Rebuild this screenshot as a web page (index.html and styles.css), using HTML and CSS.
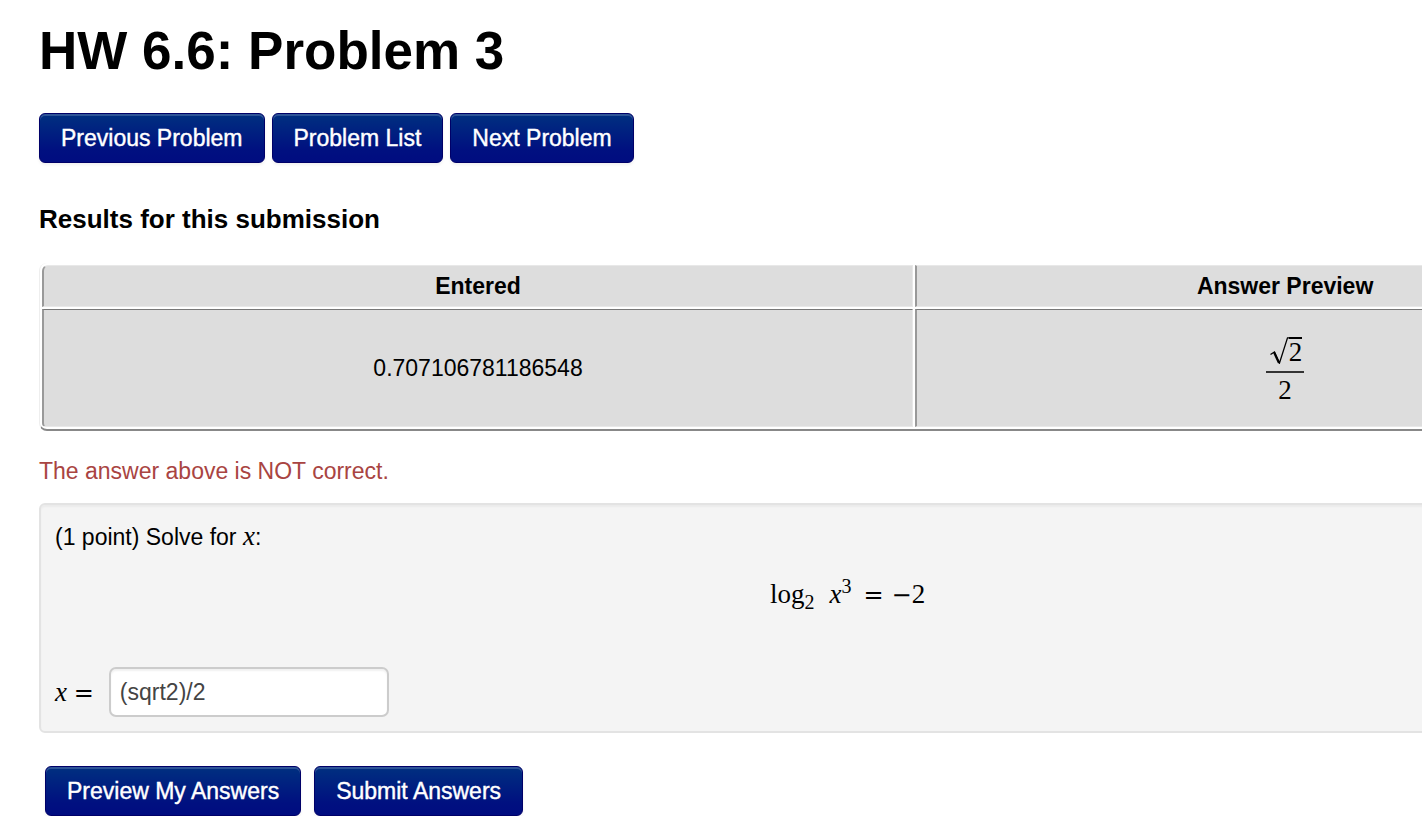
FILE: index.html
```html
<!DOCTYPE html>
<html lang="en">
<head>
<meta charset="utf-8">
<title>HW 6.6: Problem 3</title>
<link rel="stylesheet" href="styles.css">
</head>
<body>
<main class="page">
  <div class="content">
    <h1 class="title">HW 6.6: Problem 3</h1>
    <nav class="problem-nav">
      <a class="btn" href="#previous">Previous Problem</a>
      <a class="btn" href="#list">Problem List</a>
      <a class="btn" href="#next">Next Problem</a>
    </nav>
    <h3 class="subtitle">Results for this submission</h3>
    <table class="results">
      <thead>
        <tr><th class="col-entered" scope="col">Entered</th><th scope="col">Answer Preview</th></tr>
      </thead>
      <tbody>
        <tr>
          <td>0.707106781186548</td>
          <td>
            <span class="fraction math">
              <span class="numerator">
                <svg class="radical" viewBox="0 0 19 28" aria-hidden="true"><path d="M.5 18.5 4.5 16 9.5 27 17.5 1.9H19" fill="none" stroke="#000" stroke-width="1.3"/><path d="M4.2 16.8 9 27" stroke="#000" stroke-width="2.1"/></svg><span class="radicand">2</span>
              </span>
              <span class="denominator">2</span>
            </span>
          </td>
        </tr>
      </tbody>
    </table>
    <p class="message">The answer above is NOT correct.</p>
    <form class="answer-form">
      <section class="problem">
        <p class="prompt">(1 point) Solve for <i class="math">x</i>:</p>
        <p class="equation math"><span>log<sub>2</sub></span><span class="power"><i>x</i><sup>3</sup></span><span class="op equals">=</span><span class="op">−</span><span>2</span></p>
        <div class="answer">
          <label class="math" for="answer"><i>x</i> <span class="op">=</span></label>
          <input class="answer-input" id="answer" type="text" value="(sqrt2)/2">
        </div>
      </section>
      <div class="actions">
        <button class="btn" type="button">Preview My Answers</button>
        <button class="btn" type="submit">Submit Answers</button>
      </div>
    </form>
  </div>
</main>
</body>
</html>
```
FILE: styles.css
```css
* { box-sizing: border-box; }

body {
  margin: 0;
  background: #fff;
  color: #000;
  font: 23px/28px "Liberation Sans", Arial, sans-serif;
}

.page {
  padding: 21px 0 0 39px;
  overflow: hidden;
}

/* The results run wider than the window. */
.content { width: 117%; }

.title {
  margin: 0 0 32px;
  font-size: 53px;
  line-height: 60px;
}

.problem-nav { display: flex; gap: 7px; }

.btn {
  display: block;
  padding: 10px 21px;
  border: 1px solid #000068;
  border-radius: 6px;
  background: linear-gradient(#003080, #001080 75%, #000c80);
  box-shadow: inset 0 2px 0 rgba(255, 255, 255, .18), 0 2px 3px rgba(0, 0, 0, .06);
  color: #fff;
  font: inherit;
  text-decoration: none;
  -webkit-text-stroke: 0.4px #fff;
}

.subtitle {
  margin: 41px 0 29px;
  font-size: 26px;
  line-height: 30px;
}

.results {
  width: 100%;
  table-layout: fixed;
  border: solid #eee;
  border-width: 0 1px 2px 1px;
  border-bottom-color: #888;
  border-radius: 8px;
  border-spacing: 2px;
  text-align: center;
}

.col-entered { width: 54.1%; }

.results th,
.results td {
  padding: 0;
  border: solid #e8e8e8;
  border-width: 1px 1px 1px 2px;
  border-left-color: #999;
  background: #ddd;
}

.results th { height: 42px; }
.results td { height: 118px; border-top-color: #777; }
.results th:first-child { border-top-left-radius: 6px; }
.results td:first-child { border-bottom-left-radius: 4px; }

.math {
  font-family: "Liberation Serif", "Times New Roman", serif;
  font-size: 27px;
}

.op {
  font-family: "DejaVu Serif", serif;
  font-size: 24px;
  line-height: 0;
}

.fraction {
  display: inline-flex;
  flex-direction: column;
  padding-top: 6px;
  vertical-align: middle;
}

.numerator {
  display: flex;
  padding: 0 2px 6px 4px;
  border-bottom: 2px solid #333;
}

.radical { width: 19px; height: 28px; }

.radicand {
  margin-top: 1px;
  border-top: 2px solid #000;
  line-height: 26px;
}

.denominator { line-height: 34px; }

.message { margin: 26px 0 18px; color: #a94442; }

.problem {
  padding: 18px 15px 14px 14px;
  border: 2px solid #e3e3e3;
  border-radius: 6px;
  background: #f4f4f4;
  box-shadow: inset 0 2px 2px rgba(0, 0, 0, .04);
}

.prompt { margin: 0; }
.prompt .math { line-height: 0; }

.equation {
  display: flex;
  justify-content: center;
  align-items: baseline;
  margin: 27px 0 57px;
  line-height: 32px;
}

.equation sub,
.equation sup {
  font-size: 20px;
  line-height: 0;
}

.power { margin-left: 15px; }
.equals { margin: 0 8px 0 12px; }

.answer { display: flex; align-items: center; gap: 15px; }

.answer-input {
  width: 280px;
  height: 50px;
  padding: 0 9px;
  border: 2px solid #ccc;
  border-radius: 7px;
  background: #fff;
  box-shadow: inset 0 2px 2px rgba(0, 0, 0, .06);
  color: #444;
  font: inherit;
}

.actions { display: flex; gap: 13px; margin: 33px 0 0 6px; }
```
